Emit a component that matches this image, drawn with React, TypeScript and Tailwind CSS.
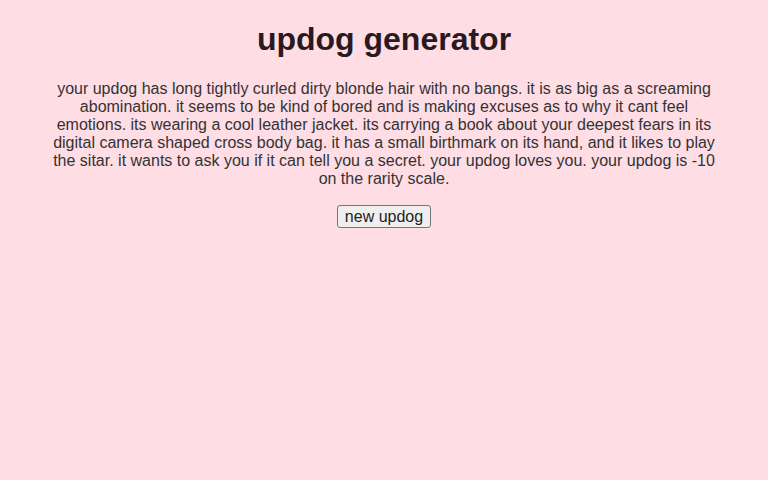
import { useState } from 'react';

const updog =
  'your updog has long tightly curled dirty blonde hair with no bangs. it is as big as a screaming abomination. it seems to be kind of bored and is making excuses as to why it cant feel emotions. its wearing a cool leather jacket. its carrying a book about your deepest fears in its digital camera shaped cross body bag. it has a small birthmark on its hand, and it likes to play the sitar. it wants to ask you if it can tell you a secret. your updog loves you. your updog is -10 on the rarity scale.';

export default function App() {
  const [text] = useState(updog);

  return (
    <div className="min-h-[480px] bg-[#ffdde5] px-12 text-center font-['Liberation_Sans',Arial,sans-serif]">
      <h1 className="pt-[21px] pb-[22px] text-[32px] font-bold leading-[37px] text-[#2a1a1e]">updog generator</h1>
      <p className="text-base leading-[18px] text-[#333333]">{text}</p>
      <button className="mt-[17px] rounded-[3px] border border-[#767676] bg-[#efefef] px-[7px] py-[1px] text-base leading-[19px] text-[#222]">
        new updog
      </button>
    </div>
  );
}
